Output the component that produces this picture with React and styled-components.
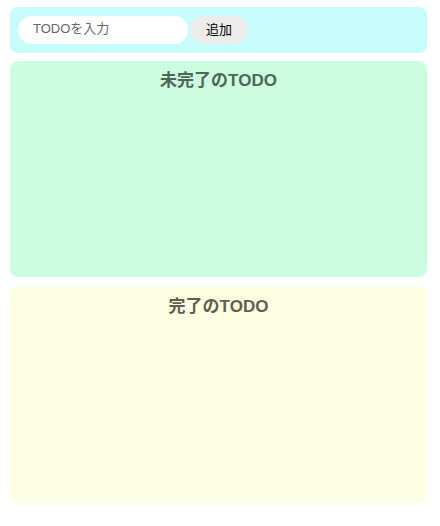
import styled, { createGlobalStyle } from "styled-components";

const GlobalStyle = createGlobalStyle`
  body {
    margin: 0;
    background: #ffffff;
    font-family: "Liberation Sans", "Noto Sans CJK JP", sans-serif;
  }
`;

const App = () => {
  return (
    <>
      <GlobalStyle />
      <Page>
        <InputArea>
          <TodoInput placeholder="TODOを入力" />
          <AddButton>追加</AddButton>
        </InputArea>
        <ListArea $bg="#cdfde1" $titleColor="#4f6657">
          <Title>未完了のTODO</Title>
          <TodoList />
        </ListArea>
        <ListArea $bg="#fefee3" $titleColor="#5f5f52" $gap="10px">
          <Title>完了のTODO</Title>
          <TodoList />
        </ListArea>
      </Page>
    </>
  );
};

const Page = styled.div`
  display: flex;
  flex-direction: column;
  width: 417px;
  padding: 7px 0 0 10px;
`;

const InputArea = styled.div`
  display: flex;
  align-items: center;
  gap: 2px;
  height: 46px;
  box-sizing: border-box;
  padding: 0 8px;
  background: #c6fcfc;
  border-radius: 8px;
`;

const TodoInput = styled.input`
  width: 170px;
  height: 28px;
  box-sizing: border-box;
  padding: 0 15px 3px;
  border: none;
  border-radius: 14px;
  outline: none;
  background: #ffffff;
  font-family: "Liberation Sans", "Noto Sans CJK JP", sans-serif;
  font-size: 13px;

  &::placeholder {
    color: #666666;
  }
`;

const AddButton = styled.button`
  width: 58px;
  height: 28px;
  padding: 0 0 3px;
  border: none;
  border-radius: 14px;
  background: #ececec;
  color: #000000;
  font-family: "Liberation Sans", "Noto Sans CJK JP", sans-serif;
  font-size: 13px;
  cursor: pointer;
`;

const ListArea = styled.div`
  margin-top: ${(p) => p.$gap || "8px"};
  min-height: 216px;
  box-sizing: border-box;
  padding: 9px 8px 8px;
  background: ${(p) => p.$bg};
  border-radius: 8px;
  color: ${(p) => p.$titleColor};
`;

const Title = styled.p`
  margin: 0;
  text-align: center;
  font-size: 17px;
  font-weight: bold;
  line-height: 22px;
`;

const TodoList = styled.ul`
  margin: 0;
  padding: 0;
  list-style: none;
`;

export default App;
